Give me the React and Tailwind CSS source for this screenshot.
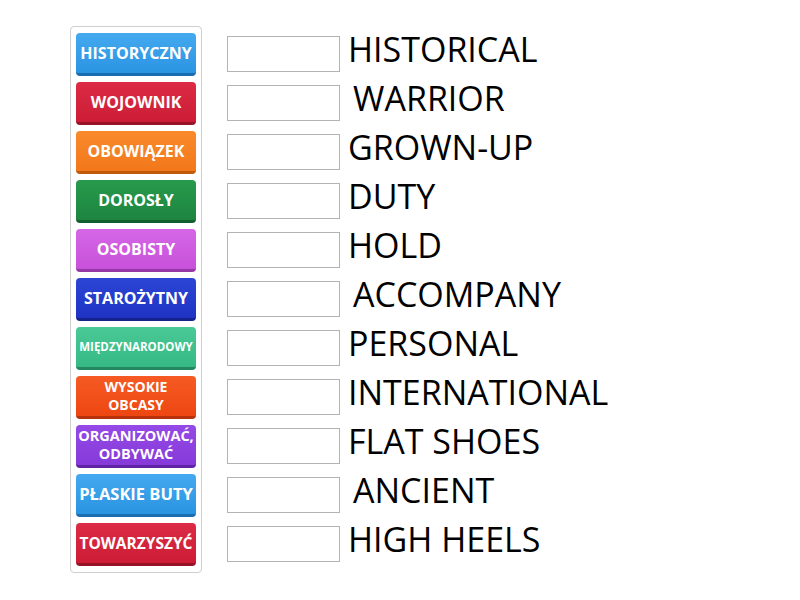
const tiles = [
  { label: "HISTORYCZNY", cls: "from-[#44a9ef] to-[#2a94e2] border-[#1c6db0]" },
  { label: "WOJOWNIK", cls: "from-[#dc2c45] to-[#cc1c36] border-[#951227]" },
  { label: "OBOWIĄZEK", cls: "from-[#f98a2c] to-[#f2781a] border-[#c05a0c]" },
  { label: "DOROSŁY", cls: "from-[#279a4c] to-[#1d8540] border-[#125e2c]" },
  { label: "OSOBISTY", cls: "from-[#d567e6] to-[#c851da] border-[#9637a6]" },
  { label: "STAROŻYTNY", cls: "from-[#2c45d4] to-[#1f33c4] border-[#14228c]" },
  { label: "MIĘDZYNARODOWY", cls: "from-[#48c996] to-[#36b985] border-[#258761]", size: "text-[11.5px]" },
  { label: "WYSOKIE OBCASY", cls: "from-[#f65a22] to-[#ee4612] border-[#b5320a]", size: "text-[14px]" },
  { label: "ORGANIZOWAĆ, ODBYWAĆ", cls: "from-[#9549e6] to-[#863ad9] border-[#5f24a3]", size: "text-[14.5px]" },
  { label: "PŁASKIE BUTY", cls: "from-[#44a9ef] to-[#2a94e2] border-[#1c6db0]", size: "text-[16.5px]" },
  { label: "TOWARZYSZYĆ", cls: "from-[#dc2c45] to-[#cc1c36] border-[#951227]", size: "text-[15.5px]" },
];

const words = [
  { text: "HISTORICAL" },
  { text: "WARRIOR", shift: true },
  { text: "GROWN-UP" },
  { text: "DUTY" },
  { text: "HOLD" },
  { text: "ACCOMPANY", shift: true },
  { text: "PERSONAL" },
  { text: "INTERNATIONAL" },
  { text: "FLAT SHOES" },
  { text: "ANCIENT", shift: true },
  { text: "HIGH HEELS" },
];

export default function App() {
  return (
    <div
      className="w-[800px] h-[600px] bg-white flex items-start"
      style={{ fontFamily: '"Open Sans", "DejaVu Sans", sans-serif' }}
    >
      <div className="ml-[70px] mt-[26px] w-[132px] border border-[#cfcfcf] rounded-[4px] pl-[5px] pr-[5px] pt-[6px] pb-[6px] flex flex-col gap-[6px]">
        {tiles.map((t) => (
          <div
            key={t.label}
            className={`w-[120px] h-[43px] rounded-[4px] border-b-[3px] bg-linear-to-b ${t.cls} flex items-center justify-center text-center text-white font-bold leading-[18px] px-[2px] ${t.size || "text-[16px]"}`}
          >
            {t.label}
          </div>
        ))}
      </div>

      <div className="ml-[25px] mt-[36px] flex flex-col gap-[13px]">
        {words.map((w) => (
          <div key={w.text} className="flex items-start">
            <div className="w-[113px] h-[36px] border border-[#b3b3b3] bg-white shrink-0" />
            <div
              className={`ml-[8px] pt-[1px] text-[34px] leading-[24px] text-black whitespace-nowrap ${w.shift ? "pl-[5px]" : ""}`}
            >
              {w.text}
            </div>
          </div>
        ))}
      </div>
    </div>
  );
}
